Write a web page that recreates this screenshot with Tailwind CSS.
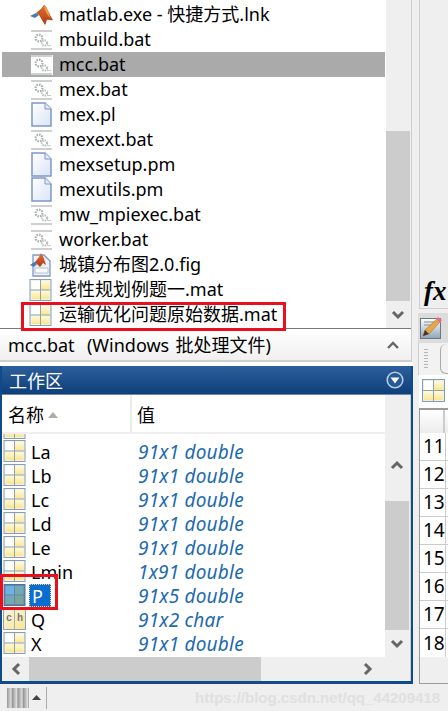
<!DOCTYPE html>
<html lang="en">
<head>
    <meta charset="UTF-8">
    <meta name="viewport" content="width=device-width, initial-scale=1.0">
    <title>MATLAB</title>
    <script src="https://cdn.jsdelivr.net/npm/@tailwindcss/browser@4"></script>
</head>
<body class="bg-[#efefef] text-black font-['Noto_Sans','Noto_Sans_CJK_SC',sans-serif] text-[18px] leading-none">
    <svg width="0" height="0" class="absolute">
        <defs>
            <linearGradient id="docfill" x1="0" y1="0" x2="1" y2="1"><stop offset="0" stop-color="#ffffff"/><stop offset="1" stop-color="#d9e4f6"/></linearGradient>
            <linearGradient id="logo" x1="0" y1="0" x2="0" y2="1"><stop offset="0" stop-color="#e8742a"/><stop offset="1" stop-color="#a8361a"/></linearGradient>
            <linearGradient id="yel" x1="0" y1="0" x2="0" y2="1"><stop offset="0" stop-color="#fefbdc"/><stop offset="1" stop-color="#fbe68e"/></linearGradient>
            <symbol id="mat" viewBox="0 0 22 22">
                <rect x="0.5" y="0.5" width="21" height="21" fill="#eef2f5" stroke="#8a9dac"/>
                <rect x="2" y="2" width="8.5" height="8.5" fill="#ffffff"/>
                <rect x="11.5" y="2" width="8.5" height="8.5" fill="url(#yel)"/>
                <rect x="2" y="11.5" width="8.5" height="8.5" fill="url(#yel)"/>
                <rect x="11.5" y="11.5" width="8.5" height="8.5" fill="url(#yel)"/>
                <path d="M11 1v20M1 11h20" stroke="#94a1a6" stroke-width="1"/>
            </symbol>
            <symbol id="matsel" viewBox="0 0 22 22">
                <rect x="0.5" y="0.5" width="21" height="21" fill="#5f8aa6" stroke="#4f7890"/>
                <rect x="2" y="2" width="8.5" height="8.5" fill="#6fb0ea"/>
                <rect x="11.5" y="2" width="8.5" height="8.5" fill="#74a9b4"/>
                <rect x="2" y="11.5" width="8.5" height="8.5" fill="#74a9b4"/>
                <rect x="11.5" y="11.5" width="8.5" height="8.5" fill="#7aa69f"/>
            </symbol>
            <symbol id="bat" viewBox="0 0 22 20">
                <rect x="0" y="0" width="22" height="20" fill="#ffffff"/>
                <path d="M0 1h21M0 19h21" stroke="#a0a0a0" stroke-width="1.2"/>
                <circle cx="8" cy="8" r="3.4" fill="none" stroke="#aab0ac" stroke-width="2.2" stroke-dasharray="1.6 1"/>
                <circle cx="13.5" cy="13" r="2.6" fill="none" stroke="#b8beba" stroke-width="2.2" stroke-dasharray="1.4 1"/>
                <path d="M16 15.5h4" stroke="#c8cccc" stroke-width="1"/>
            </symbol>
            <symbol id="doc" viewBox="0 0 21 25">
                <path d="M1 1h13l6 6v17H1z" fill="url(#docfill)" stroke="#7f96c6" stroke-width="1.5"/>
                <path d="M14 1v6h6" fill="#e4ebf7" stroke="#7f96c6" stroke-width="1"/>
            </symbol>
            <symbol id="matlab" viewBox="0 0 24 22">
                <path d="M0 12l6-3 3 2-4 3z" fill="#3f7fb8"/>
                <path d="M6 9l5-4 3-4 3 3-3 8-5-1z" fill="#c9551f"/>
                <path d="M14 1c3 2 6 11 9 15-2 1-4-1-6 0-1 1-1 4-2 5-2-3-4-7-6-10z" fill="url(#logo)"/>
                <path d="M14 1c3 2 5 9 6 13-3-3-5-7-6-13z" fill="#f0a040"/>
            </symbol>
            <symbol id="fig" viewBox="0 0 22 25">
                <path d="M3 3h11l6 6v15H3z" fill="#eef2fa" stroke="#7f96c6" stroke-width="1.3"/>
                <path d="M5 16h13v5H5z" fill="#ffffff" stroke="#b8bcc4"/>
                <path d="M6 14l5-8h4v7z" fill="#fbfbfb" stroke="#cccccc" stroke-width="0.6"/>
                <path d="M0 13l5-3 4-5 2-4 2 3 3 9-3-2-3 4-4-4z" fill="url(#logo)"/>
                <path d="M0 13l5-3 2 2-3 3z" fill="#3f7fb8"/>
            </symbol>
        </defs>
    </svg>

    <div class="relative w-[448px] h-[711px] overflow-hidden flex flex-col">
        <div class="flex h-[684px]">
            <!-- left column -->
            <div class="w-[413px] shrink-0 flex flex-col">
                <!-- current folder -->
                <div class="h-[362px] w-[412px] border-r border-[#cfcfcf] flex flex-col">
                    <div class="flex h-[328px]">
                        <div class="w-[386px] bg-white pl-[2px] pr-[1px] pt-[2px]">
                            <div class="h-[25px] flex items-center pl-[28px] gap-[5px]"><svg class="w-[24px] h-[22px] shrink-0"><use href="#matlab"/></svg><span class="pb-[2px]">matlab.exe - 快捷方式.lnk</span></div>
                            <div class="h-[25px] flex items-center pl-[29px] gap-[6px]"><svg class="w-[22px] h-[20px] shrink-0"><use href="#bat"/></svg><span class="pb-[2px]">mbuild.bat</span></div>
                            <div class="h-[25px] flex items-center pl-[29px] gap-[6px] bg-[#aaaaaa]"><svg class="w-[22px] h-[20px] shrink-0"><use href="#bat"/></svg><span class="pb-[2px]">mcc.bat</span></div>
                            <div class="h-[25px] flex items-center pl-[29px] gap-[6px]"><svg class="w-[22px] h-[20px] shrink-0"><use href="#bat"/></svg><span class="pb-[2px]">mex.bat</span></div>
                            <div class="h-[25px] flex items-center pl-[29px] gap-[7px]"><svg class="w-[21px] h-[25px] shrink-0"><use href="#doc"/></svg><span class="pb-[2px]">mex.pl</span></div>
                            <div class="h-[25px] flex items-center pl-[29px] gap-[6px]"><svg class="w-[22px] h-[20px] shrink-0"><use href="#bat"/></svg><span class="pb-[2px]">mexext.bat</span></div>
                            <div class="h-[25px] flex items-center pl-[29px] gap-[7px]"><svg class="w-[21px] h-[25px] shrink-0"><use href="#doc"/></svg><span class="pb-[2px]">mexsetup.pm</span></div>
                            <div class="h-[25px] flex items-center pl-[29px] gap-[7px]"><svg class="w-[21px] h-[25px] shrink-0"><use href="#doc"/></svg><span class="pb-[2px]">mexutils.pm</span></div>
                            <div class="h-[25px] flex items-center pl-[29px] gap-[6px]"><svg class="w-[22px] h-[20px] shrink-0"><use href="#bat"/></svg><span class="pb-[2px]">mw_mpiexec.bat</span></div>
                            <div class="h-[25px] flex items-center pl-[29px] gap-[6px]"><svg class="w-[22px] h-[20px] shrink-0"><use href="#bat"/></svg><span class="pb-[2px]">worker.bat</span></div>
                            <div class="h-[25px] flex items-center pl-[28px] gap-[7px]"><svg class="w-[22px] h-[25px] shrink-0"><use href="#fig"/></svg><span class="pb-[2px]">城镇分布图2.0.fig</span></div>
                            <div class="h-[25px] flex items-center pl-[27px] gap-[7px]"><svg class="w-[23px] h-[22px] shrink-0"><use href="#mat"/></svg><span class="pb-[2px]">线性规划例题一.mat</span></div>
                            <div class="h-[25px] flex items-center pl-[27px] gap-[7px]"><svg class="w-[23px] h-[22px] shrink-0"><use href="#mat"/></svg><span class="pb-[2px]">运输优化问题原始数据.mat</span></div>
                        </div>
                        <!-- scrollbar -->
                        <div class="w-[24px] flex flex-col bg-[#efefef]">
                            <div class="h-[131px]"></div>
                            <div class="h-[170px] bg-[#cccccc]"></div>
                            <div class="flex-1 flex items-center justify-center"><svg width="14" height="10" viewBox="0 0 14 10"><path d="M2 2l5 5 5-5" fill="none" stroke="#666666" stroke-width="3"/></svg></div>
                        </div>
                    </div>
                    <div class="flex-1 border-t border-[#777777] bg-gradient-to-b from-white to-[#f0f0f0] flex items-center justify-between pl-[8px] pr-[12px]">
                        <span class="whitespace-pre [word-spacing:1.5px]">mcc.bat  (Windows 批处理文件)</span>
                        <svg width="12" height="8" viewBox="0 0 12 8"><path d="M1 7l5-5 5 5" fill="none" stroke="#666666" stroke-width="2.4"/></svg>
                    </div>
                    <div class="h-[2px] bg-[#cfcfcf]"></div>
                </div>
                <div class="h-[4px] bg-white"></div>
                <!-- workspace -->
                <div class="flex-1 border-x-[2px] border-b-[3px] border-[#114a8b] flex flex-col min-h-0">
                    <div class="h-[29px] shrink-0 bg-gradient-to-b from-[#2c5f9b] to-[#0d3f7a] flex items-center justify-between pl-[7px] pr-[7px] text-white border-b border-[#6f8aa8]">
                        <span class="pt-[1px]">工作区</span>
                        <svg width="18" height="18" viewBox="0 0 18 18"><circle cx="9" cy="9" r="7.8" fill="#245a92" stroke="#b9cde0" stroke-width="1.6"/><path d="M4.5 6.5h9L9 12.5z" fill="#ffffff"/></svg>
                    </div>
                    <div class="flex flex-1 min-h-0 bg-[#efefef] border-r border-[#cfcfcf]">
                        <div class="w-[383px] flex flex-col">
                            <div class="h-[39px] shrink-0 flex bg-white border-b-2 border-[#f0f0f0]">
                                <div class="w-[130px] flex items-center pl-[6px] border-r-2 border-[#ececec] pt-[3px]"><span>名称</span><svg class="ml-[4px]" width="10" height="6" viewBox="0 0 10 6"><path d="M0 6l5-6 5 6z" fill="#aeaea0"/></svg></div>
                                <div class="flex items-center pl-[5px] pt-[3px]">值</div>
                            </div>
                            <div class="h-[223px] bg-white overflow-hidden">
                                <div class="h-[5px] overflow-hidden flex items-end pl-[1px]"><svg class="w-[23px] h-[22px] shrink-0"><use href="#mat"/></svg></div>
                                <div class="h-[24px] flex items-center pl-[1px]"><svg class="w-[23px] h-[22px] shrink-0"><use href="#mat"/></svg><span class="ml-[5px] w-[107px] pt-[2px]">La</span><span class="pt-[2px] italic text-[19px] tracking-[0.2px] text-[#1c69ad]">91x1 double</span></div>
                                <div class="h-[24px] flex items-center pl-[1px]"><svg class="w-[23px] h-[22px] shrink-0"><use href="#mat"/></svg><span class="ml-[5px] w-[107px] pt-[2px]">Lb</span><span class="pt-[2px] italic text-[19px] tracking-[0.2px] text-[#1c69ad]">91x1 double</span></div>
                                <div class="h-[24px] flex items-center pl-[1px]"><svg class="w-[23px] h-[22px] shrink-0"><use href="#mat"/></svg><span class="ml-[5px] w-[107px] pt-[2px]">Lc</span><span class="pt-[2px] italic text-[19px] tracking-[0.2px] text-[#1c69ad]">91x1 double</span></div>
                                <div class="h-[24px] flex items-center pl-[1px]"><svg class="w-[23px] h-[22px] shrink-0"><use href="#mat"/></svg><span class="ml-[5px] w-[107px] pt-[2px]">Ld</span><span class="pt-[2px] italic text-[19px] tracking-[0.2px] text-[#1c69ad]">91x1 double</span></div>
                                <div class="h-[24px] flex items-center pl-[1px]"><svg class="w-[23px] h-[22px] shrink-0"><use href="#mat"/></svg><span class="ml-[5px] w-[107px] pt-[2px]">Le</span><span class="pt-[2px] italic text-[19px] tracking-[0.2px] text-[#1c69ad]">91x1 double</span></div>
                                <div class="h-[24px] flex items-center pl-[1px]"><svg class="w-[23px] h-[22px] shrink-0"><use href="#mat"/></svg><span class="ml-[5px] w-[107px] pt-[2px]">Lmin</span><span class="pt-[2px] italic text-[19px] tracking-[0.2px] text-[#1c69ad]">1x91 double</span></div>
                                <div class="h-[24px] flex items-center pl-[1px]"><svg class="w-[23px] h-[22px] shrink-0"><use href="#matsel"/></svg><span class="ml-[3px] w-[22px] h-[23px] flex items-center pl-[2px] pt-[2px] bg-[#0a6ed1] text-white border border-dotted border-[#f5d76e]">P</span><span class="ml-[87px] pt-[2px] italic text-[19px] tracking-[0.2px] text-[#1c69ad]">91x5 double</span></div>
                                <div class="h-[24px] flex items-center pl-[1px]">
                                    <div class="w-[23px] h-[22px] shrink-0 flex border border-[#8ea3b5] bg-gradient-to-br from-[#f4f4ea] to-[#fbe58a] text-[10px] font-bold text-[#777777] font-['Liberation_Mono',monospace]"><span class="flex-1 flex items-center justify-center border-r border-[#b0b0a0]">c</span><span class="flex-1 flex items-center justify-center">h</span></div>
                                    <span class="ml-[5px] w-[107px] pt-[2px]">Q</span><span class="pt-[2px] italic text-[19px] tracking-[0.2px] text-[#1c69ad]">91x2 char</span>
                                </div>
                                <div class="h-[24px] flex items-center pl-[1px]"><svg class="w-[23px] h-[22px] shrink-0"><use href="#mat"/></svg><span class="ml-[5px] w-[107px] pt-[2px]">X</span><span class="pt-[2px] italic text-[19px] tracking-[0.2px] text-[#1c69ad]">91x1 double</span></div>
                            </div>
                            <div class="flex-1 flex">
                                <div class="w-[27px] flex items-center justify-center"><svg width="10" height="14" viewBox="0 0 10 14"><path d="M8 2L3 7l5 5" fill="none" stroke="#666666" stroke-width="3"/></svg></div>
                                <div class="w-[232px] bg-[#cccccc]"></div>
                            </div>
                        </div>
                        <div class="flex-1 flex flex-col border-r border-[#efefef]">
                            <div class="h-[39px]"></div>
                            <div class="h-[67px] flex items-center justify-center pb-[6px]"><svg width="14" height="10" viewBox="0 0 14 10"><path d="M2 8l5-5 5 5" fill="none" stroke="#666666" stroke-width="3"/></svg></div>
                            <div class="h-[129px] bg-[#cccccc]"></div>
                            <div class="h-[27px] flex items-center justify-center"><svg width="14" height="10" viewBox="0 0 14 10"><path d="M2 2l5 5 5-5" fill="none" stroke="#666666" stroke-width="3"/></svg></div>
                            <div class="flex-1 flex items-center -ml-[22px]"><svg width="10" height="14" viewBox="0 0 10 14"><path d="M2 2l5 5-5 5" fill="none" stroke="#666666" stroke-width="3"/></svg></div>
                        </div>
                    </div>
                </div>
            </div>
            <!-- right column -->
            <div class="flex-1 flex flex-col pl-[6px]">
                <div class="h-[309px] shrink-0 border-l border-b border-[#cfcfcf] flex items-end pl-[4px] pb-[3px]">
                    <span class="font-['Liberation_Serif',serif] italic font-bold text-[27px] leading-[28px] whitespace-nowrap">fx</span>
                </div>
                <div class="h-[30px] shrink-0 -ml-[1px] mt-[4px] bg-[#dcdcdc] flex items-start pl-[2px] pt-[3px]">
                    <svg width="23" height="23" viewBox="0 0 23 23">
                        <defs><linearGradient id="pad" x1="0" y1="0" x2="0" y2="1"><stop offset="0" stop-color="#ffffff"/><stop offset="1" stop-color="#8ea6b8"/></linearGradient></defs>
                        <rect x="0.5" y="2.5" width="20" height="20" fill="url(#pad)" stroke="#6c7880"/>
                        <path d="M4 9h8M4 6h11" stroke="#888888" stroke-width="1"/>
                        <path d="M3 20l2-6L17 3l3 3L9 18z" fill="#e6a64a" stroke="#a87428" stroke-width="0.6"/>
                        <path d="M16 3l2-2 4 3-2 3z" fill="#e8708a"/>
                        <path d="M3 20l2-6 4 4z" fill="#3a3a3a"/>
                    </svg>
                </div>
                <div class="h-[32px] shrink-0 -ml-[1px] relative bg-[#f2f2f2] border-l border-[#cfcfcf] flex items-center pl-[5px]">
                    <div class="w-[4px] h-[24px] border-y-[2px] border-[#f2f2f2] bg-[repeating-linear-gradient(to_bottom,#b5b5b5_0,#b5b5b5_1px,transparent_1px,transparent_3px)]"></div>
                    <div class="absolute left-[21px] top-[1px] w-[14px] h-[30px] border-l border-b border-[#aaaaaa] rounded-bl-[6px] rounded-tl-[6px]"></div>
                </div>
                <div class="h-[33px] shrink-0 bg-white flex items-start pl-[3px] pt-[4px]"><svg class="w-[23px] h-[23px]"><use href="#mat"/></svg></div>
                <div class="border-t-2 border-l border-[#9a9a9a] flex flex-col bg-white">
                    <div class="h-[23px] flex bg-gradient-to-b from-white to-[#ececec]"><div class="w-[25px] border-r-2 border-[#cccccc]"></div></div>
                    <div class="h-[28px] flex items-center border-b border-[#cccccc] pl-[3px] text-[19px]"><span class="w-[23px] h-full flex items-center border-r border-[#cccccc]">11</span></div>
                    <div class="h-[28px] flex items-center border-b border-[#cccccc] pl-[3px] text-[19px]"><span class="w-[23px] h-full flex items-center border-r border-[#cccccc]">12</span></div>
                    <div class="h-[28px] flex items-center border-b border-[#cccccc] pl-[3px] text-[19px]"><span class="w-[23px] h-full flex items-center border-r border-[#cccccc]">13</span></div>
                    <div class="h-[28px] flex items-center border-b border-[#cccccc] pl-[3px] text-[19px]"><span class="w-[23px] h-full flex items-center border-r border-[#cccccc]">14</span></div>
                    <div class="h-[28px] flex items-center border-b border-[#cccccc] pl-[3px] text-[19px]"><span class="w-[23px] h-full flex items-center border-r border-[#cccccc]">15</span></div>
                    <div class="h-[28px] flex items-center border-b border-[#cccccc] pl-[3px] text-[19px]"><span class="w-[23px] h-full flex items-center border-r border-[#cccccc]">16</span></div>
                    <div class="h-[28px] flex items-center border-b border-[#cccccc] pl-[3px] text-[19px]"><span class="w-[23px] h-full flex items-center border-r border-[#cccccc]">17</span></div>
                    <div class="h-[28px] flex items-center pl-[3px] text-[19px]"><span class="w-[23px] h-full flex items-center border-r border-[#cccccc]">18</span></div>
                </div>
                <div class="flex-1 border-l border-b border-[#9a9a9a]"></div>
            </div>
        </div>
        <!-- status bar -->
        <div class="flex-1 flex items-center pl-[7px] relative">
            <div class="w-[22px] h-[20px] mt-[1px] bg-[repeating-linear-gradient(to_right,#989898_0,#dcdcdc_4px,#989898_5.5px)]"></div>
            <svg class="ml-[3px]" width="9" height="5" viewBox="0 0 9 5"><path d="M0 5l4.5-5L9 5z" fill="#444444"/></svg>
            <div class="ml-[5px] w-px h-[22px] bg-[#aaaaaa]"></div>
            <span class="absolute left-[195px] top-0 h-[27px] flex items-center text-[15px] font-['Liberation_Sans',sans-serif] font-bold text-[#e0e0e0] whitespace-nowrap">https://blog.csdn.net/qq_44209418</span>
        </div>
        <!-- red annotation boxes -->
        <div class="absolute left-[21px] top-[302px] w-[265px] h-[29px] border-[3px] border-[#e8101e]"></div>
        <div class="absolute left-0 top-[574px] w-[58px] h-[36px] border-[3px] border-[#e8101e]"></div>
    </div>
</body>
</html>
